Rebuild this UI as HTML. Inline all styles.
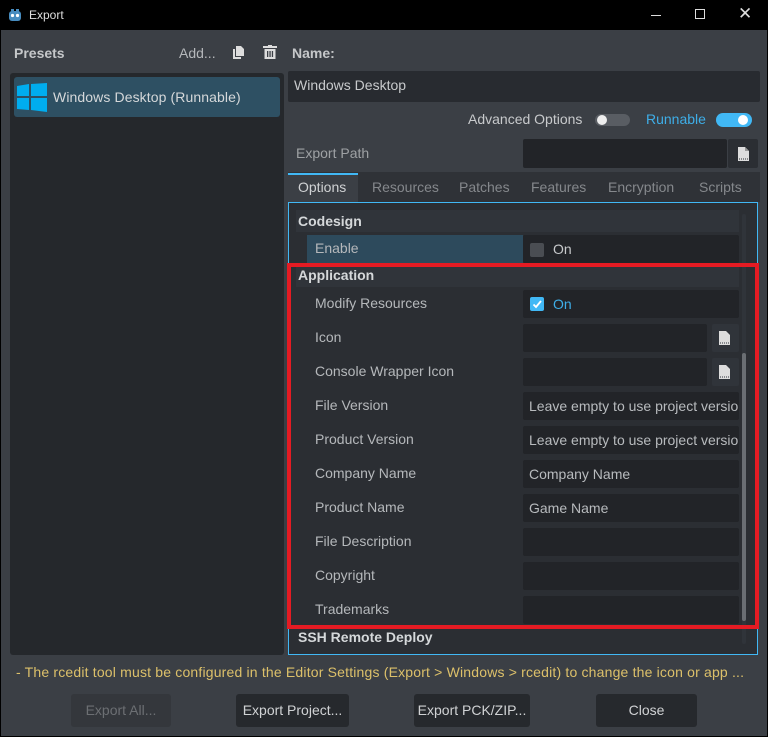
<!DOCTYPE html>
<html><head><meta charset="utf-8"><style>
*{box-sizing:border-box;margin:0;padding:0}
body{width:768px;height:737px;background:#000;font-family:"Liberation Sans","DejaVu Sans",sans-serif;font-size:14px;color:#c8cacc;position:relative;overflow:hidden}
.a{position:absolute}
.win{left:1px;top:30px;width:766px;height:706px;background:#3b3f45}
.t{white-space:nowrap}
.lbl{color:#b5b8bb;font-size:14px}
.val{background:#222428;border-radius:2px}
.ico{width:11px;height:14px}
</style></head><body>
<svg class="a" style="left:8px;top:8px" width="14" height="14" viewBox="0 0 14 14"><rect x="1" y="3" width="12" height="10" rx="3" fill="#478cbf"/><circle cx="4.5" cy="7.5" r="1.6" fill="#fff"/><circle cx="9.5" cy="7.5" r="1.6" fill="#fff"/><rect x="3" y="1" width="3" height="3" fill="#478cbf"/><rect x="8" y="1" width="3" height="3" fill="#478cbf"/></svg>
<div class="a t" style="left:29px;top:8px;font-size:12px;color:#ddd">Export</div>
<div class="a" style="left:651px;top:15px;width:10px;height:1px;background:#ddd"></div>
<div class="a" style="left:695px;top:9px;width:10px;height:10px;border:1px solid #ddd"></div>
<div class="a t" style="left:738px;top:4px;font-size:17px;color:#ddd">✕</div>
<div class="a win"></div>
<div class="a t" style="left:14px;top:45px;font-weight:bold;color:#c5c7c9">Presets</div>
<div class="a t" style="left:179px;top:45px;color:#b5b8bb">Add...</div>
<svg class="a" style="left:233px;top:46px" width="12" height="13" viewBox="0 0 12 13"><path d="M3 0h5l3 3v7H3z" fill="#ddd"/><path d="M0 3h2v8h6v2H0z" fill="#ddd"/></svg>
<svg class="a" style="left:263px;top:45px" width="14" height="14" viewBox="0 0 14 14"><rect x="0" y="1" width="14" height="2" fill="#ddd"/><rect x="5" y="0" width="4" height="2" fill="#ddd"/><path d="M1.5 4h11v10h-11z" fill="#ddd"/><rect x="4" y="6" width="1.3" height="6" fill="#3b3f45"/><rect x="6.4" y="6" width="1.3" height="6" fill="#3b3f45"/><rect x="8.8" y="6" width="1.3" height="6" fill="#3b3f45"/></svg>
<div class="a" style="left:10px;top:73px;width:274px;height:582px;background:#25282c;border-radius:3px"></div>
<div class="a" style="left:14px;top:77px;width:266px;height:40px;background:#2e5063;border-radius:3px"></div>
<svg class="a" style="left:17px;top:83px" width="30" height="29" viewBox="0 0 30 29"><path d="M0 3l12-2v12H0zM14 1l16-1v13H14zM0 15h12v12L0 26zM14 15h16v14l-16-2z" fill="#00adef"/></svg>
<div class="a t" style="left:53px;top:89px;color:#d5d8da;letter-spacing:0.1px">Windows Desktop (Runnable)</div>
<div class="a t" style="left:292px;top:45px;font-weight:bold;color:#c5c7c9">Name:</div>
<div class="a val" style="left:288px;top:71px;width:472px;height:31px;background:#282b30"></div>
<div class="a t" style="left:294px;top:77px;color:#c8cacc">Windows Desktop</div>
<div class="a t" style="left:468px;top:111px;color:#c8cacc">Advanced Options</div>
<div class="a" style="left:595px;top:114px;width:35px;height:12px;background:#595d63;border-radius:6px"></div>
<div class="a" style="left:597px;top:115px;width:10px;height:10px;background:#eee;border-radius:5px"></div>
<div class="a t" style="left:646px;top:111px;color:#3eaee8">Runnable</div>
<div class="a" style="left:716px;top:113px;width:36px;height:14px;background:#41b8f5;border-radius:7px"></div>
<div class="a" style="left:738px;top:115px;width:10px;height:10px;background:#fff;border-radius:5px"></div>
<div class="a t" style="left:296px;top:145px;color:#9ea1a4">Export Path</div>
<div class="a val" style="left:523px;top:139px;width:204px;height:29px"></div>
<div class="a" style="left:728px;top:139px;width:30px;height:29px;background:#2b2e33;border-radius:2px"></div>
<svg class="a ico" style="left:738px;top:147px" viewBox="0 0 11 14"><path d="M0 0h7l4 4v10H0z" fill="#ddd"/><path d="M7 0v4h4" fill="#999"/><path d="M1 12h9" stroke="#2b2e33" stroke-dasharray="1 1"/></svg>
<div class="a" style="left:288px;top:172px;width:472px;height:30px;background:#2f3237"></div>
<div class="a" style="left:288px;top:173px;width:70px;height:29px;background:#3b3f45;border-top:2px solid #41b8f5"></div>
<div class="a t" style="left:298px;top:179px;color:#d0d2d4">Options</div>
<div class="a t" style="left:372px;top:179px;color:#85888c">Resources</div>
<div class="a t" style="left:459px;top:179px;color:#85888c">Patches</div>
<div class="a t" style="left:531px;top:179px;color:#85888c">Features</div>
<div class="a t" style="left:608px;top:179px;color:#85888c">Encryption</div>
<div class="a t" style="left:699px;top:179px;color:#85888c">Scripts</div>
<div class="a" style="left:288px;top:202px;width:470px;height:453px;background:#2b2e33;border:1px solid #41b8f5"></div>
<div class="a" style="left:296px;top:210px;width:443px;height:22px;background:#30343a"></div>
<div class="a t" style="left:298px;top:213px;font-weight:bold;color:#d5d8da">Codesign</div>
<div class="a" style="left:307px;top:235px;width:216px;height:28px;background:#2d4a5c"></div>
<div class="a val" style="left:523px;top:235px;width:216px;height:28px"></div>
<div class="a t lbl" style="left:315px;top:240px">Enable</div>
<div class="a" style="left:530px;top:243px;width:14px;height:14px;background:#4a4d52;border-radius:2px"></div>
<div class="a t" style="left:553px;top:241px;color:#c8cacc">On</div>
<div class="a" style="left:296px;top:265px;width:443px;height:22px;background:#30343a"></div>
<div class="a t" style="left:298px;top:267px;font-weight:bold;color:#d5d8da">Application</div>
<div class="a val" style="left:523px;top:290px;width:216px;height:28px"></div>
<div class="a t lbl" style="left:315px;top:295px">Modify Resources</div>
<div class="a" style="left:530px;top:297px;width:14px;height:14px;background:#41b8f5;border-radius:2px"></div>
<svg class="a" style="left:531px;top:298px" width="12" height="12" viewBox="0 0 12 12"><path d="M2.5 6.5l2.5 2.5 5-6" stroke="#fff" stroke-width="1.8" fill="none"/></svg>
<div class="a t" style="left:553px;top:296px;color:#3eaee8">On</div>
<div class="a t lbl" style="left:315px;top:329px">Icon</div>
<div class="a val" style="left:523px;top:324px;width:184px;height:28px"></div>
<div class="a" style="left:712px;top:324px;width:27px;height:28px;background:#30343a;border-radius:2px"></div>
<svg class="a ico" style="left:719px;top:331px" viewBox="0 0 11 14"><path d="M0 0h7l4 4v10H0z" fill="#ddd"/><path d="M1 12h9" stroke="#30343a" stroke-dasharray="1 1"/></svg>
<div class="a t lbl" style="left:315px;top:363px">Console Wrapper Icon</div>
<div class="a val" style="left:523px;top:358px;width:184px;height:28px"></div>
<div class="a" style="left:712px;top:358px;width:27px;height:28px;background:#30343a;border-radius:2px"></div>
<svg class="a ico" style="left:719px;top:365px" viewBox="0 0 11 14"><path d="M0 0h7l4 4v10H0z" fill="#ddd"/><path d="M1 12h9" stroke="#30343a" stroke-dasharray="1 1"/></svg>
<div class="a t lbl" style="left:315px;top:397px">File Version</div>
<div class="a val" style="left:523px;top:392px;width:216px;height:28px;overflow:hidden"><div class="t" style="padding:6px 0 0 6px;color:#b8bbbe">Leave empty to use project version</div></div>
<div class="a t lbl" style="left:315px;top:431px">Product Version</div>
<div class="a val" style="left:523px;top:426px;width:216px;height:28px;overflow:hidden"><div class="t" style="padding:6px 0 0 6px;color:#b8bbbe">Leave empty to use project version</div></div>
<div class="a t lbl" style="left:315px;top:465px">Company Name</div>
<div class="a val" style="left:523px;top:460px;width:216px;height:28px"><div class="t" style="padding:6px 0 0 6px;color:#b8bbbe">Company Name</div></div>
<div class="a t lbl" style="left:315px;top:499px">Product Name</div>
<div class="a val" style="left:523px;top:494px;width:216px;height:28px"><div class="t" style="padding:6px 0 0 6px;color:#b8bbbe">Game Name</div></div>
<div class="a t lbl" style="left:315px;top:533px">File Description</div>
<div class="a val" style="left:523px;top:528px;width:216px;height:28px"></div>
<div class="a t lbl" style="left:315px;top:567px">Copyright</div>
<div class="a val" style="left:523px;top:562px;width:216px;height:28px"></div>
<div class="a t lbl" style="left:315px;top:601px">Trademarks</div>
<div class="a val" style="left:523px;top:596px;width:216px;height:28px"></div>
<div class="a t" style="left:298px;top:629px;font-weight:bold;color:#d5d8da">SSH Remote Deploy</div>
<div class="a" style="left:742px;top:214px;width:4px;height:430px;background:#30343a;border-radius:2px"></div>
<div class="a" style="left:742px;top:353px;width:4px;height:268px;background:#6a6e73;border-radius:2px"></div>
<div class="a" style="left:287px;top:263px;width:472px;height:366px;border:4px solid #e51b23"></div>
<div class="a t" style="left:16px;top:664px;color:#dcc06a;letter-spacing:0.18px">- The rcedit tool must be configured in the Editor Settings (Export &gt; Windows &gt; rcedit) to change the icon or app ...</div>
<div class="a" style="left:71px;top:694px;width:100px;height:33px;background:#34373c;border-radius:3px;color:#6c6f73;text-align:center;line-height:33px">Export All...</div>
<div class="a" style="left:236px;top:694px;width:113px;height:33px;background:#26292d;border-radius:3px;color:#d0d2d4;text-align:center;line-height:33px">Export Project...</div>
<div class="a" style="left:414px;top:694px;width:116px;height:33px;background:#26292d;border-radius:3px;color:#d0d2d4;text-align:center;line-height:33px">Export PCK/ZIP...</div>
<div class="a" style="left:596px;top:694px;width:101px;height:33px;background:#26292d;border-radius:3px;color:#d0d2d4;text-align:center;line-height:33px">Close</div>
</body></html>
